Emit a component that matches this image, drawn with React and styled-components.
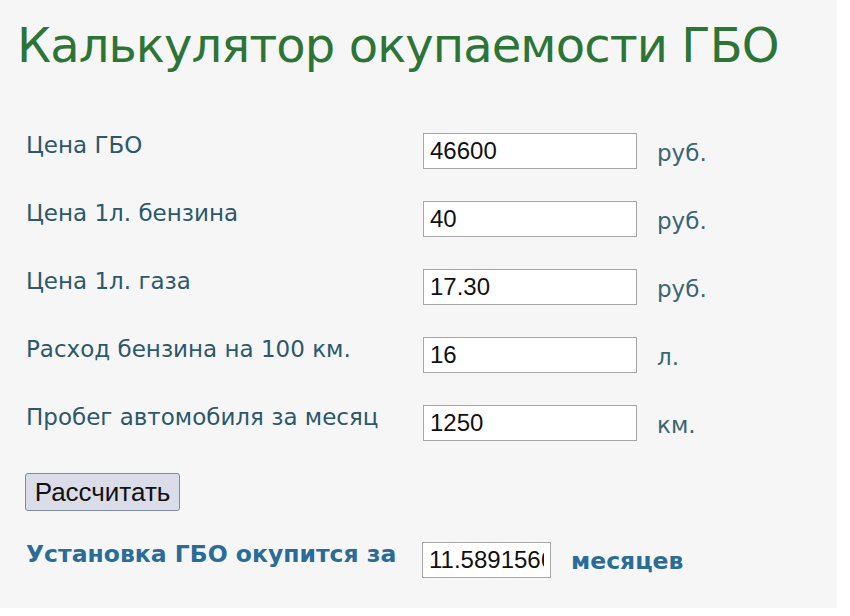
import React, { useState } from 'react'
import styled, { createGlobalStyle } from 'styled-components'

const GlobalStyle = createGlobalStyle`
    html, body {
        margin: 0;
        padding: 0;
        background: #ffffff;
    }
`

const fields = [
    { name: 'price', label: 'Цена ГБО', value: '46600', unit: 'руб.' },
    { name: 'petrol', label: 'Цена 1л. бензина', value: '40', unit: 'руб.' },
    { name: 'gas', label: 'Цена 1л. газа', value: '17.30', unit: 'руб.' },
    { name: 'usage', label: 'Расход бензина на 100 км.', value: '16', unit: 'л.' },
    { name: 'mileage', label: 'Пробег автомобиля за месяц', value: '1250', unit: 'км.' },
]

const App = () => {
    const [values, setValues] = useState(
        fields.reduce((acc, f) => ({ ...acc, [f.name]: f.value }), {})
    )
    const [result, setResult] = useState('11.58915662650602')

    const handleChange = (e) => {
        setValues({ ...values, [e.target.name]: e.target.value })
    }

    const handleCalc = () => {
        const price = parseFloat(values.price)
        const diff = (parseFloat(values.petrol) - parseFloat(values.gas)) * parseFloat(values.usage) / 100 * parseFloat(values.mileage)
        setResult(String(price / diff))
    }

    return <Page>
        <GlobalStyle />
        <Title>Калькулятор окупаемости ГБО</Title>
        <Form>
            {fields.map((f) => (
                <Row key={f.name}>
                    <Label>{f.label}</Label>
                    <Input name={f.name} value={values[f.name]} onChange={handleChange} />
                    <Unit>{f.unit}</Unit>
                </Row>
            ))}
            <Button onClick={handleCalc}>Рассчитать</Button>
            <ResultRow>
                <ResultLabel>Установка ГБО окупится за</ResultLabel>
                <Input $small readOnly value={result} />
                <ResultUnit>месяцев</ResultUnit>
            </ResultRow>
        </Form>
    </Page>
}

export default App

const Page = styled.div`
    width: 837px;
    height: 608px;
    box-sizing: border-box;
    padding: 15px 0 0 25px;
    background: #f6f6f6;
`

const Title = styled.h1`
    margin: 0 0 0 -8px;
    font-family: "DejaVu Sans", Verdana, sans-serif;
    font-weight: normal;
    font-size: 48px;
    letter-spacing: -0.9px;
    line-height: 60px;
    color: #2d7537;
    white-space: nowrap;
`

const Form = styled.div`
    display: flex;
    flex-direction: column;
    margin-top: 58px;
`

const Row = styled.div`
    display: grid;
    grid-template-columns: 378px 214px auto;
    column-gap: 20px;
    align-items: start;
    height: 36px;
    margin-bottom: 32px;
`

const Label = styled.span`
    margin-left: 1px;
    font-family: "DejaVu Sans", Verdana, sans-serif;
    font-size: 23px;
    line-height: 24px;
    color: #2b586c;
    white-space: nowrap;
`

const Unit = styled.span`
    font-family: "DejaVu Sans", Verdana, sans-serif;
    font-size: 23px;
    line-height: 24px;
    margin-top: 8px;
    color: #3a6575;
`

const Input = styled.input`
    box-sizing: border-box;
    width: ${(p) => (p.$small ? '129px' : '214px')};
    height: 36px;
    margin: 0;
    padding: 0 6px;
    border: 1px solid #a6a6a6;
    background: #ffffff;
    font-family: "Liberation Sans", Arial, sans-serif;
    font-size: 24px;
    color: #111111;
    outline: none;
`

const Button = styled.button`
    align-self: flex-start;
    box-sizing: border-box;
    width: 155px;
    height: 38px;
    margin: 0;
    padding: 0;
    border: 1px solid #7d8aa3;
    border-radius: 3px;
    background: #dadde7;
    font-family: "Liberation Sans", Arial, sans-serif;
    font-size: 26px;
    color: #111111;
    cursor: pointer;
`

const ResultRow = styled.div`
    display: grid;
    grid-template-columns: 378px 129px auto;
    column-gap: 19px;
    align-items: start;
    margin-top: 31px;
`

const ResultLabel = styled.span`
    margin-left: 1px;
    font-family: "DejaVu Sans", Verdana, sans-serif;
    font-weight: bold;
    font-size: 23.5px;
    line-height: 24px;
    color: #2a6c97;
    white-space: nowrap;
`

const ResultUnit = styled(ResultLabel)`
    margin-top: 7px;
`
